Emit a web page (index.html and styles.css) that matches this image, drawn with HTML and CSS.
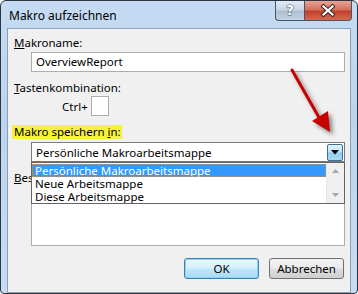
FILE: index.html
```html
<!DOCTYPE html>
<html lang="de">
<head>
  <meta charset="UTF-8" />
  <title>Makro aufzeichnen</title>
  <link rel="stylesheet" href="styles.css">
</head>
<body>

  <div class="window">
    <div class="titlebar">
      <span class="title">Makro aufzeichnen</span>
      <div class="caption-btns">
        <div class="cap-btn help"><svg width="28" height="19" viewBox="0 0 28 19"><text x="14" y="14" text-anchor="middle" class="help-glyph">?</text></svg></div>
        <div class="cap-btn close"><svg width="46" height="19" viewBox="0 0 46 19"><path d="M18.5 5.5 L27.5 13.5 M27.5 5.5 L18.5 13.5" stroke="#3a2a28" stroke-width="4.2" stroke-linecap="square"/><path d="M18.5 5.5 L27.5 13.5 M27.5 5.5 L18.5 13.5" stroke="#fff" stroke-width="2.2" stroke-linecap="square"/></svg></div>
      </div>
    </div>

    <div class="client">
      <div class="label"><u>M</u>akroname:</div>
      <div class="textbox">OverviewReport</div>

      <div class="label gap"><u>T</u>astenkombination:</div>
      <div class="shortcut-row">
        <span class="ctrl">Ctrl+</span>
        <div class="keybox"></div>
      </div>

      <div class="label gap"><span class="marker">Makro speichern <u>i</u>n:</span></div>
      <div class="combo">
        <span class="combo-text">Persönliche Makroarbeitsmappe</span>
        <div class="drop-btn"><svg width="8" height="5" viewBox="0 0 8 5"><path d="M0 0 H8 L4 4.5 Z" fill="#000"/></svg></div>

        <!-- opened list lies over the description -->
        <div class="droplist">
          <div class="items">
            <div class="item selected">Persönliche Makroarbeitsmappe</div>
            <div class="item">Neue Arbeitsmappe</div>
            <div class="item">Diese Arbeitsmappe</div>
          </div>
          <div class="scrollbar">
            <svg width="7" height="4" viewBox="0 0 7 4"><path d="M0 4 H7 L3.5 0 Z" fill="#a8a8a8"/></svg>
            <svg width="7" height="4" viewBox="0 0 7 4"><path d="M0 0 H7 L3.5 4 Z" fill="#a8a8a8"/></svg>
          </div>
        </div>
      </div>

      <div class="label desc-label"><u>B</u>es</div>
      <div class="textarea"></div>

      <div class="buttons">
        <div class="button default">OK</div>
        <div class="button">Abbrechen</div>
      </div>
    </div>

    <!-- red annotation arrow -->
    <svg class="arrow" width="50" height="72" viewBox="0 0 50 72">
      <path d="M4 2 L33 53" stroke="#c80000" stroke-width="3" stroke-linecap="round"/>
      <path d="M24 53 L42 64 L40 43 Z" fill="#c80000"/>
    </svg>
  </div>

</body>
</html>
```

FILE: styles.css
```css
body {
  margin: 0;
  font-family: "Segoe UI", "Noto Sans", sans-serif;
  font-size: 11.5px;
  color: #000;
  background: #fff;
}

.window {
  position: relative;
  width: 358px;
  height: 294px;
  box-sizing: border-box;
  border: 1px solid #2c3540;
  border-radius: 6px 6px 4px 4px;
  padding: 0 6px 6px 6px;
  background: linear-gradient(180deg, #c4dbf3 0%, #bcd4ee 40%, #c6dcf3 100%);
  overflow: hidden;
}

.titlebar {
  height: 27px;
  display: flex;
  justify-content: space-between;
  align-items: flex-start;
}

.title {
  font-size: 12px;
  margin: 6px 0 0 2px;
  color: #000;
}

.caption-btns {
  display: flex;
  margin-right: -1px;
}

.cap-btn {
  height: 19px;
  border: 1px solid #4a5564;
  border-top: none;
  box-sizing: content-box;
}

.cap-btn svg {
  display: block;
}

.help {
  width: 28px;
  border-radius: 0 0 0 4px;
  border-right: none;
  background: linear-gradient(180deg, #e3ebf4 0%, #c8d6e6 45%, #aebfd3 55%, #c2d3e6 100%);
}

.help-glyph {
  font-family: "DejaVu Sans", sans-serif;
  font-weight: bold;
  font-size: 14px;
  fill: #fff;
  stroke: #4a5868;
  stroke-width: 1;
  paint-order: stroke;
}

.close {
  width: 46px;
  border-radius: 0 0 4px 0;
  background: linear-gradient(180deg, #e8a595 0%, #d8705c 45%, #c4402a 55%, #d56a50 100%);
}

.client {
  height: 257px;
  border: 1px solid #8b9fb5;
  background: #f0f0f0;
  padding: 6px 5px 0 5px;
  box-sizing: content-box;
  position: relative;
}

.label {
  line-height: 15px;
  height: 15px;
  padding-left: 1px;
  white-space: nowrap;
}

.label.gap {
  margin-top: 8px;
}

.marker {
  background: #f6f13c;
  padding: 0 1px 0 2px;
  margin-left: -2px;
  display: inline-block;
  line-height: 14px;
}

.textbox {
  margin: 2px 0 0 18px;
  height: 18px;
  border: 1px solid #abadb3;
  background: #fff;
  line-height: 18px;
  padding-left: 4px;
}

.shortcut-row {
  display: flex;
  align-items: center;
  margin-top: 1px;
  padding-left: 49px;
}

.ctrl {
  margin-right: 3px;
}

.keybox {
  width: 16px;
  height: 18px;
  border: 1px solid #abadb3;
  background: #fff;
}

.combo {
  position: relative;
  margin: 3px 0 0 18px;
  height: 18px;
  border: 1px solid #7a7a7a;
  background: #fff;
  display: flex;
  align-items: center;
  justify-content: space-between;
}

.combo-text {
  padding-left: 4px;
}

.drop-btn {
  width: 14px;
  height: 15px;
  margin-right: 1px;
  border: 1px solid #3c6e97;
  border-radius: 2px;
  background: linear-gradient(180deg, #e3f3fc 0%, #bfe3f7 45%, #94cdee 55%, #a9d8f2 100%);
  display: flex;
  align-items: center;
  justify-content: center;
}

.droplist {
  position: absolute;
  top: 19px;
  left: -1px;
  right: -1px;
  height: 40px;
  border: 1px solid #646464;
  background: #fff;
  display: flex;
  z-index: 2;
}

.items {
  flex: 1;
  padding-top: 1px;
}

.item {
  height: 13px;
  line-height: 13px;
  padding-left: 3px;
  white-space: nowrap;
  overflow: hidden;
}

.item.selected {
  background: #3399ff;
  color: #fff;
  outline: 1px dotted #e08a2a;
  outline-offset: -1px;
}

.scrollbar {
  width: 17px;
  background: #f0f0f0;
  border-left: 1px solid #e6e6e6;
  display: flex;
  flex-direction: column;
  justify-content: space-between;
  align-items: center;
  padding: 6px 0 6px;
}

.desc-label {
  margin-top: 8px;
}

.textarea {
  margin: 4px 0 0 18px;
  height: 55px;
  border: 1px solid #abadb3;
  background: #fff;
}

.buttons {
  display: flex;
  justify-content: flex-end;
  gap: 10px;
  margin-top: 12px;
  padding-right: 1px;
}

.button {
  width: 73px;
  height: 19px;
  line-height: 19px;
  text-align: center;
  border: 1px solid #707070;
  border-radius: 3px;
  background: linear-gradient(180deg, #f2f2f2 0%, #ebebeb 45%, #dddddd 55%, #cfcfcf 100%);
}

.button.default {
  border-color: #3c7fb1;
  box-shadow: inset 0 0 0 1px #8fd4f5;
  background: linear-gradient(180deg, #eaf6fd 0%, #d9f0fc 45%, #bee6fd 55%, #a7d9f5 100%);
}

.arrow {
  position: absolute;
  left: 287px;
  top: 67px;
  filter: drop-shadow(3px 3px 2px rgba(0, 0, 0, 0.45));
}
```
